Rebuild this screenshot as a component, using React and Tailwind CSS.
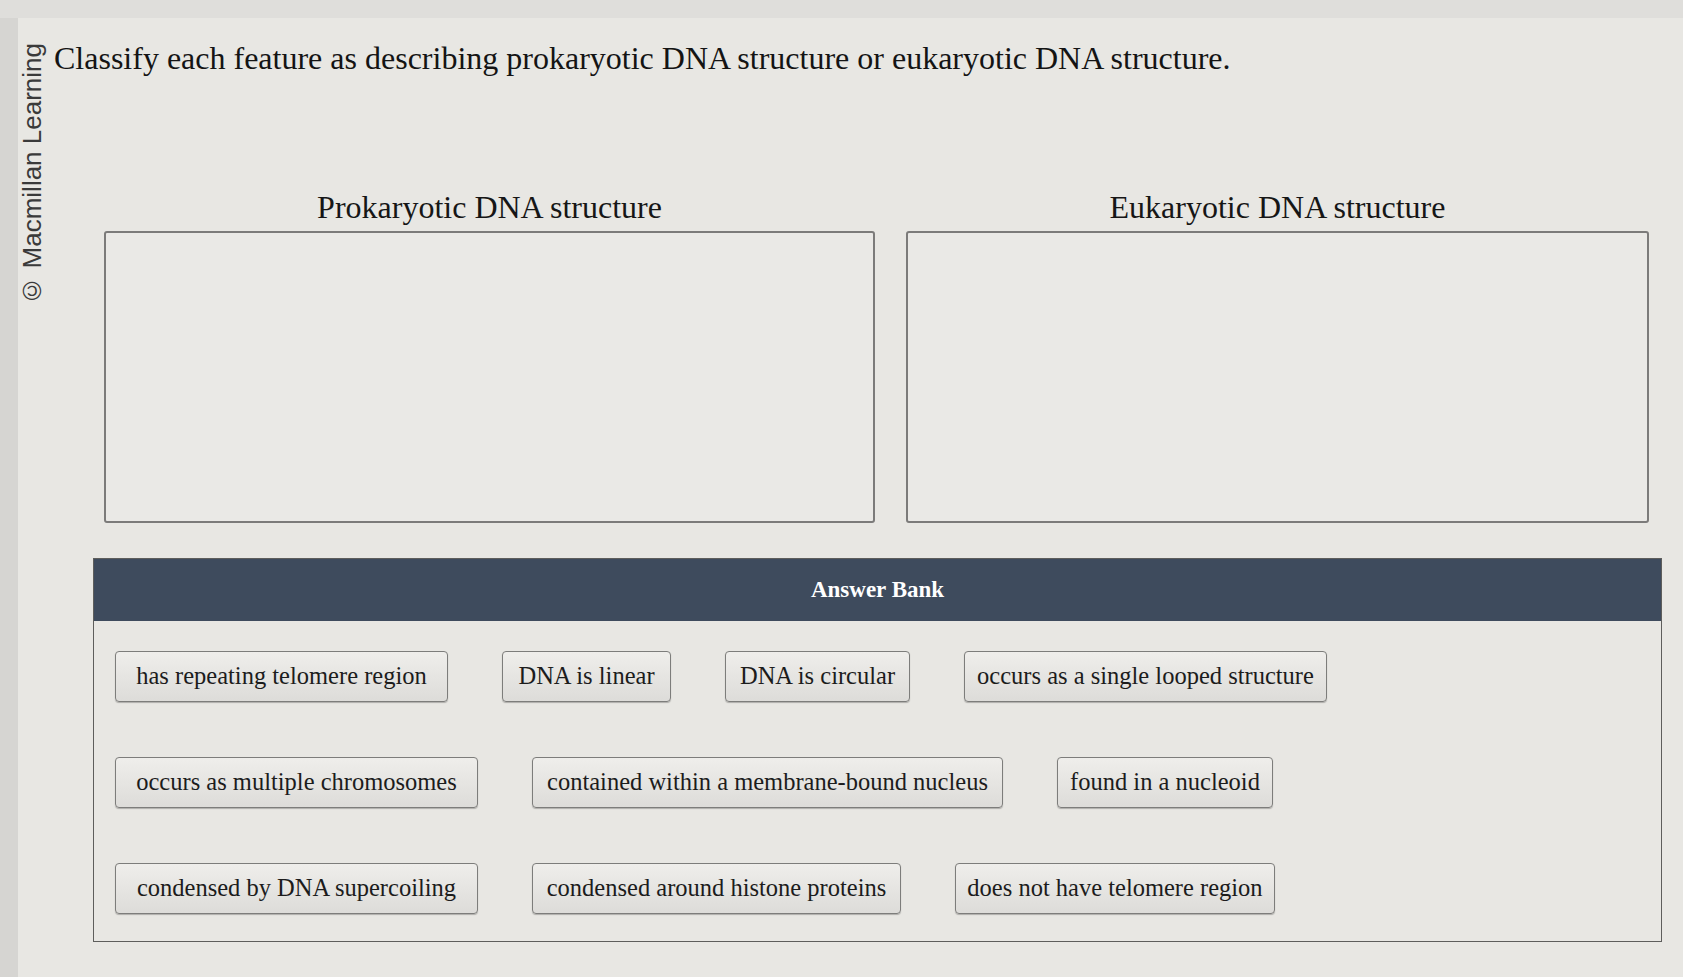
import React from "react";

const rows = [
  [
    { label: "has repeating telomere region", w: "w-[333px]" },
    { label: "DNA is linear", w: "w-[169px]" },
    { label: "DNA is circular", w: "w-[185px]" },
    { label: "occurs as a single looped structure", w: "w-[363px]" },
  ],
  [
    { label: "occurs as multiple chromosomes", w: "w-[363px]" },
    { label: "contained within a membrane-bound nucleus", w: "w-[471px]" },
    { label: "found in a nucleoid", w: "w-[216px]" },
  ],
  [
    { label: "condensed by DNA supercoiling", w: "w-[363px]" },
    { label: "condensed around histone proteins", w: "w-[369px]" },
    { label: "does not have telomere region", w: "w-[320px]" },
  ],
];

function Chip({ label, w }) {
  return (
    <div
      className={`${w} h-[51px] flex items-center justify-center rounded-[4px] border-[1.5px] border-[#7d7d7b] bg-gradient-to-b from-[#efeeeb] to-[#dddcd9] shadow-[0_1px_1px_rgba(0,0,0,0.25)] text-[24.5px] text-[#1c1c1c] whitespace-nowrap`}
    >
      {label}
    </div>
  );
}

function DropZone({ title }) {
  return (
    <div className="flex flex-col items-center">
      <h2 className="h-[40px] text-[32px] leading-[40px] text-[#161616] whitespace-nowrap">{title}</h2>
      <div className="mt-[4px] h-[292px] w-full rounded-[3px] border-2 border-[#7c7b7a] bg-[#eae9e6]" />
    </div>
  );
}

export default function App() {
  return (
    <div className="flex h-[977px] w-full overflow-hidden bg-[#e8e7e3] font-['Liberation_Serif',serif]">
      {/* screen edge */}
      <div className="w-[18px] bg-[#d6d5d2]" />

      {/* copyright strip */}
      <div className="w-[28px] pt-[43px]">
        <div className="rotate-180 [writing-mode:vertical-rl] font-['Liberation_Sans',sans-serif] text-[26px] leading-[28px] text-[#3a3a3a] whitespace-nowrap">
          © Macmillan Learning
        </div>
      </div>

      <div className="flex-1">
        <div className="h-[18px] bg-[#dfdedb] -ml-[46px]" />
        <h1 className="pl-[8px] pt-[20px] text-[32px] leading-[40px] text-[#141414] whitespace-nowrap">
          Classify each feature as describing prokaryotic DNA structure or eukaryotic DNA structure.
        </h1>

        <div className="mt-[109px] ml-[58px] grid grid-cols-[771px_743px] gap-[31px]">
          <DropZone title="Prokaryotic DNA structure" />
          <DropZone title="Eukaryotic DNA structure" />
        </div>

        {/* answer bank */}
        <div className="mt-[35px] ml-[47px] mr-[21px] border-[1.5px] border-[#5e5e5c]">
          <div className="flex h-[62px] items-center justify-center bg-[#3e4b5d] text-[23px] font-bold text-white">
            Answer Bank
          </div>
          <div className="flex flex-col gap-[55px] px-[21px] pt-[30px] pb-[27px]">
            {rows.map((row, i) => (
              <div key={i} className="flex gap-[54px]">
                {row.map((c) => (
                  <Chip key={c.label} label={c.label} w={c.w} />
                ))}
              </div>
            ))}
          </div>
        </div>
      </div>
    </div>
  );
}
